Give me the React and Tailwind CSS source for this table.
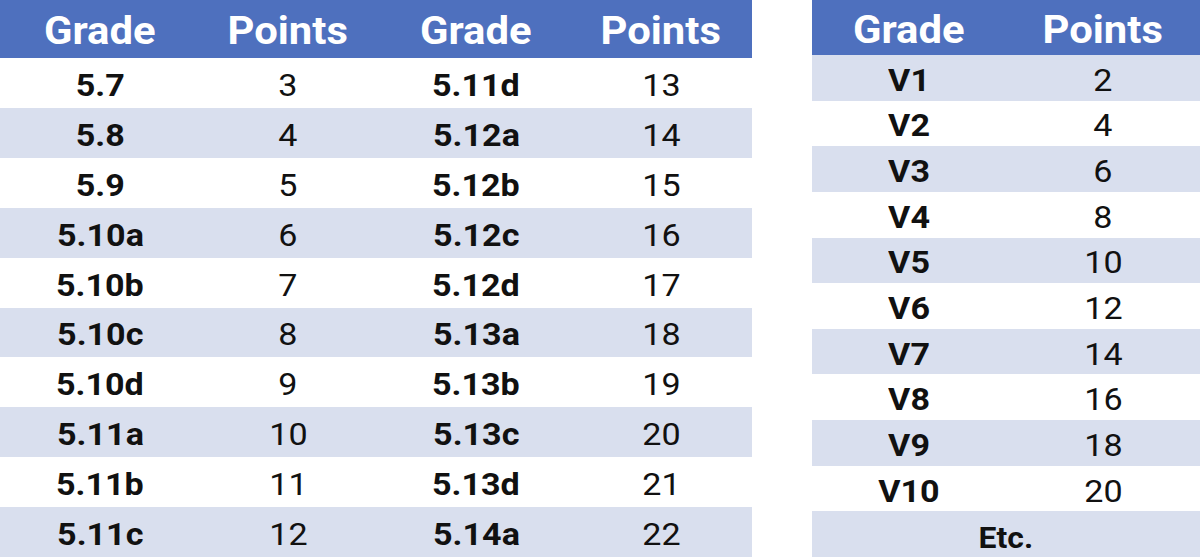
import React from "react";

const left = [
  ["5.7", "3", "5.11d", "13"],
  ["5.8", "4", "5.12a", "14"],
  ["5.9", "5", "5.12b", "15"],
  ["5.10a", "6", "5.12c", "16"],
  ["5.10b", "7", "5.12d", "17"],
  ["5.10c", "8", "5.13a", "18"],
  ["5.10d", "9", "5.13b", "19"],
  ["5.11a", "10", "5.13c", "20"],
  ["5.11b", "11", "5.13d", "21"],
  ["5.11c", "12", "5.14a", "22"],
];

const right = [
  ["V1", "2"],
  ["V2", "4"],
  ["V3", "6"],
  ["V4", "8"],
  ["V5", "10"],
  ["V6", "12"],
  ["V7", "14"],
  ["V8", "16"],
  ["V9", "18"],
  ["V10", "20"],
];

function H({ children }) {
  return (
    <div className="flex items-center justify-center">
      <span className="mt-[4px] inline-block scale-x-[1.1] text-[38px] font-bold leading-none text-white">
        {children}
      </span>
    </div>
  );
}

function C({ children, bold }) {
  return (
    <div className="flex items-center justify-center">
      <span
        className={
          "mt-[5px] inline-block scale-x-[1.1] text-[31px] leading-none text-[#111] " +
          (bold ? "font-bold" : "font-normal")
        }
      >
        {children}
      </span>
    </div>
  );
}

export default function App() {
  return (
    <div
      className="flex h-[557px] w-[1200px] bg-white"
      style={{ fontFamily: "Roboto, 'Liberation Sans', sans-serif" }}
    >
      <div className="flex w-[752px] flex-col">
        <div className="grid h-[58px] shrink-0 grid-cols-[188px_188px_188px_182px] bg-[#4e70be] pl-[6px]">
          <H>Grade</H>
          <H>Points</H>
          <H>Grade</H>
          <H>Points</H>
        </div>
        {left.map((r, i) => (
          <div
            key={i}
            className={
              "grid flex-1 grid-cols-[188px_188px_188px_182px] pl-[6px] " +
              (i % 2 === 1 ? "bg-[#d9dfee]" : "bg-white")
            }
          >
            <C bold>{r[0]}</C>
            <C>{r[1]}</C>
            <C bold>{r[2]}</C>
            <C>{r[3]}</C>
          </div>
        ))}
      </div>
      <div className="ml-[60px] flex w-[388px] flex-col">
        <div className="grid h-[55px] shrink-0 grid-cols-2 bg-[#4e70be]">
          <H>Grade</H>
          <H>Points</H>
        </div>
        {right.map((r, i) => (
          <div
            key={i}
            className={
              "grid flex-1 grid-cols-2 " +
              (i % 2 === 0 ? "bg-[#d9dfee]" : "bg-white")
            }
          >
            <C bold>{r[0]}</C>
            <C>{r[1]}</C>
          </div>
        ))}
        <div className="flex flex-1 items-center justify-center bg-[#d9dfee]">
          <span className="mt-[8px] inline-block scale-x-[1.1] text-[29px] font-bold leading-none text-[#111]">
            Etc.
          </span>
        </div>
      </div>
    </div>
  );
}
